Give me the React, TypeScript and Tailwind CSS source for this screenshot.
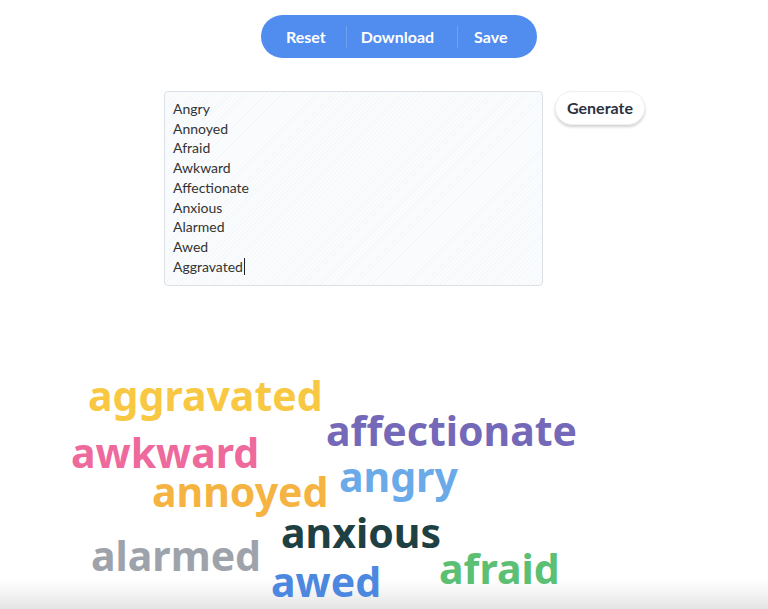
import React from "react";

const font = { fontFamily: "Lato, 'Noto Sans', sans-serif" };
const cloudFont = { fontFamily: "'Noto Sans', 'Open Sans', sans-serif", fontVariantLigatures: "none" as const };

const emotions = [
  "Angry",
  "Annoyed",
  "Afraid",
  "Awkward",
  "Affectionate",
  "Anxious",
  "Alarmed",
  "Awed",
  "Aggravated",
];

// word cloud: position on the canvas is the content
const cloud = [
  { w: "aggravated", x: 88, y: 15, c: "text-[#f8c842]" },
  { w: "affectionate", x: 326, y: 50, c: "text-[#7469b8]" },
  { w: "awkward", x: 71, y: 72, c: "text-[#ee6a9c]" },
  { w: "angry", x: 339, y: 96, c: "text-[#6aaae8]" },
  { w: "annoyed", x: 152, y: 111, c: "text-[#f5b342]" },
  { w: "anxious", x: 281, y: 152, c: "text-[#1f4043]" },
  { w: "alarmed", x: 91, y: 175, c: "text-[#9ea3ab]" },
  { w: "afraid", x: 439, y: 188, c: "text-[#5bbf74]" },
  { w: "awed", x: 271, y: 201, c: "text-[#4c88e0]" },
];

export default function App() {
  return (
    <div className="relative h-[609px] w-[768px] overflow-hidden bg-white" style={font}>
      {/* Top toolbar */}
      <div className="flex pt-[15px] pl-[261px]">
        <div className="flex h-[43px] w-[276px] items-center rounded-full bg-[#508def] pl-[25px] text-[16px] font-bold text-white">
          <button className="pr-[20px]">Reset</button>
          <span className="h-[22px] w-px bg-[#6fa3f2]" />
          <button className="pl-[14px] pr-[23px]">Download</button>
          <span className="h-[22px] w-px bg-[#6fa3f2]" />
          <button className="pl-[16px]">Save</button>
        </div>
      </div>

      {/* Input row */}
      <div className="mt-[33px] flex items-start gap-[12px] pl-[164px]">
        <div className="h-[195px] w-[379px] rounded-[4px] border border-[#dce1e8] bg-[repeating-linear-gradient(135deg,#f4f8fb_0px,#f4f8fb_1px,#fafcfd_1px,#fafcfd_3px)] px-[8px] pt-[7px] text-[14px] leading-[19.7px] text-[#333]">
          {emotions.map((e, i) => (
            <div key={e} className="flex items-center">
              {e}
              {i === emotions.length - 1 && <span className="ml-px h-[17px] w-px bg-[#222]" />}
            </div>
          ))}
        </div>
        <button className="h-[34px] w-[90px] rounded-full border border-[#eef0f3] bg-white text-[16px] font-bold text-[#2c3140] shadow-[0_2px_3px_rgba(0,0,0,0.18)]">
          Generate
        </button>
      </div>

      {/* Word cloud */}
      <div className="relative z-10 mt-[74px] h-[250px]" style={cloudFont}>
        {cloud.map((c) => (
          <span
            key={c.w}
            className={`absolute text-[41px] font-bold leading-none ${c.c}`}
            style={{ left: c.x, top: c.y }}
          >
            {c.w}
          </span>
        ))}
      </div>

      <div className="absolute bottom-0 left-0 h-[30px] w-full bg-gradient-to-b from-white via-[#f3f3f3] to-[#e4e4e4]" />
    </div>
  );
}
